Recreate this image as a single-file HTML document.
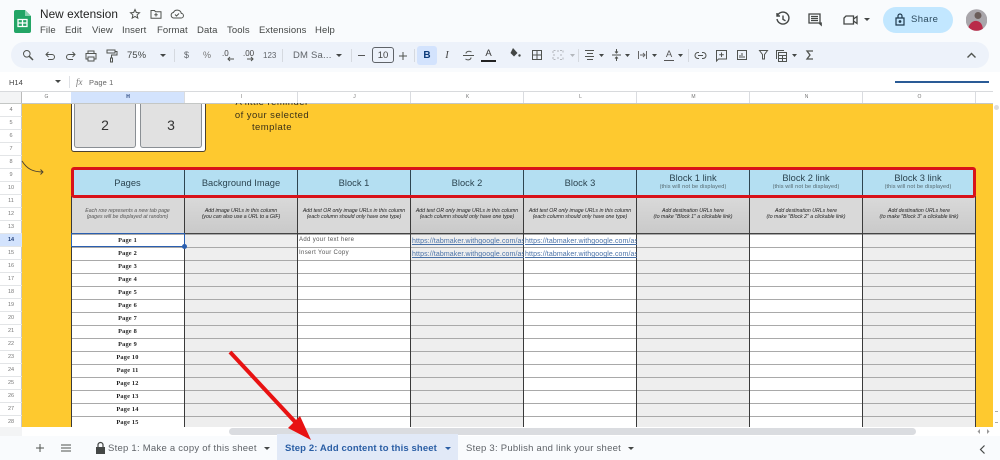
<!DOCTYPE html>
<html><head><meta charset="utf-8"><style>
html,body{margin:0;padding:0;width:1000px;height:460px;overflow:hidden;background:#f9fbfd}
body{position:relative;font-family:"Liberation Sans",sans-serif;color:#444746}
.a,.a *{box-sizing:border-box}
.a{position:absolute;white-space:nowrap}
.c{text-align:center}
.m{font-size:9.5px;top:25px;color:#444746;letter-spacing:.1px}
.ch{top:92px;height:11px;font-size:5px;line-height:11px;color:#777;text-align:center}
.rn{left:0;width:22px;font-size:5.5px;line-height:13px;height:13px;color:#777;text-align:center}
.h{top:170px;height:26px;font-size:9.3px;line-height:26px;text-align:center;color:#2b4450;letter-spacing:.02px}
.hl{top:173px;font-size:9.3px;line-height:11px;text-align:center;color:#2b4450;letter-spacing:.02px}
.hs{top:184px;font-size:5.6px;line-height:6px;text-align:center;color:#55686f;letter-spacing:.1px}
.n{top:208px;font-size:5.2px;line-height:6.3px;text-align:center;font-style:italic;color:#222}
.p{left:71px;width:113px;font-size:6.3px;font-weight:bold;font-family:"Liberation Serif",serif;line-height:13px;text-align:center;color:#222;letter-spacing:.2px}
.t{font-size:6px;line-height:13px;color:#555;left:299px;letter-spacing:.35px}
.u{font-size:7px;line-height:13px;color:#4a72a8;text-decoration:underline;overflow:hidden;width:112px;letter-spacing:.1px}
svg{position:absolute;overflow:visible}
.i{fill:none;stroke:#50534f;stroke-width:1}
.tb{font-size:9px;color:#5f6368}
.tab{font-size:9.5px;top:443px;line-height:11px;letter-spacing:.25px}
</style></head><body>

<!-- top bar -->
<div class="a" style="left:0;top:0;width:1000px;height:72px;background:#f9fbfd"></div>
<svg style="left:14px;top:10px" width="17" height="23" viewBox="0 0 17 23"><path d="M2 0H11L17 6V21a2 2 0 0 1-2 2H2a2 2 0 0 1-2-2V2a2 2 0 0 1 2-2z" fill="#23a566"/><path d="M11 0L17 6H11z" fill="#8ed1b1"/><path d="M4 9.500h9v7H4zM4 13h9M8.500 9.500v7" fill="none" stroke="#fff" stroke-width="1.300"/></svg>
<div class="a" style="left:40px;top:6px;font-size:11.8px;line-height:16px;color:#1f1f1f;letter-spacing:.05px">New extension</div>
<svg class="i" style="left:129px;top:8px" width="12" height="12" viewBox="0 0 12 12"><path d="M6 1.500l1.300 3 3.200.3-2.400 2.100.7 3.200L6 8.400l-2.800 1.700.7-3.200-2.400-2.100 3.200-.3z"/></svg>
<svg class="i" style="left:150px;top:9px" width="12" height="10" viewBox="0 0 12 10"><path d="M1 1.500h3.500l1 1.200H11v6.500H1zM6 4v3.500M4.300 5.700h3.400"/></svg>
<svg class="i" style="left:170px;top:9px" width="14" height="10" viewBox="0 0 14 10"><path d="M3.500 9H11a2.300 2.300 0 0 0 .3-4.600A4.200 4.200 0 0 0 3.400 3.500 2.800 2.800 0 0 0 3.500 9zM5 5.500l1.500 1.500 2.500-2.500"/></svg>
<div class="a m" style="left:40px">File</div>
<div class="a m" style="left:65px">Edit</div>
<div class="a m" style="left:92px">View</div>
<div class="a m" style="left:122px">Insert</div>
<div class="a m" style="left:157px">Format</div>
<div class="a m" style="left:197px">Data</div>
<div class="a m" style="left:227px">Tools</div>
<div class="a m" style="left:259px">Extensions</div>
<div class="a m" style="left:315px">Help</div>

<svg style="left:776px;top:12px;fill:none;stroke:#444746;stroke-width:1.400" width="14" height="14" viewBox="0 0 14 14"><path d="M1.500 3.500A6 6 0 1 1 1 7M1 1v3h3M7 3.500V7.300l2.500 1.500"/></svg>
<svg style="left:808px;top:13px;fill:none;stroke:#444746;stroke-width:1.300" width="14" height="13" viewBox="0 0 14 13"><path d="M1 1h11v9h1.200v2L11 10H1zM3 3.500h7M3 5.500h7M3 7.500h7"/></svg>
<svg style="left:843px;top:14px;fill:none;stroke:#444746;stroke-width:1.300" width="15" height="12" viewBox="0 0 15 12"><path d="M3 2h7.500v8H1V4zM10.500 5L14 2.500v7L10.500 7"/></svg>
<svg style="left:864px;top:18px" width="6" height="3"><path d="M0 0h6L3 3z" fill="#444746"/></svg>
<div class="a" style="left:883px;top:7px;width:70px;height:26px;border-radius:13px;background:#c2e7ff"></div>
<svg style="left:895px;top:13px;fill:none;stroke:#1f3a4d;stroke-width:1.200" width="10" height="13" viewBox="0 0 10 13"><path d="M1 5h8v7H1zM3 5V3a2 2 0 0 1 4 0v2"/><circle cx="5" cy="8.500" r=".8" fill="#1f3a4d"/></svg>
<div class="a" style="left:911px;top:14px;font-size:9.500px;line-height:12px;color:#2b4a5e;letter-spacing:.4px">Share</div>
<svg style="left:966px;top:9px" width="21" height="22" viewBox="0 0 21 22"><defs><clipPath id="av"><circle cx="10.500" cy="11" r="10.800"/></clipPath></defs><g clip-path="url(#av)"><rect width="21" height="22" fill="#a9a6ab"/><circle cx="12" cy="6.500" r="3.500" fill="#6b5d5a"/><path d="M2 22C2 15 7 11 11 12c5 1 6 6 6 10z" fill="#b92b49"/></g></svg>

<!-- toolbar -->
<div class="a" style="left:11px;top:42px;width:978px;height:26px;border-radius:13px;background:#edf2fa"></div>
<div class="a" style="left:417px;top:46px;width:20px;height:19px;border-radius:3px;background:#d3e3fd"></div>
<svg class="i" style="left:22px;top:49px" width="12" height="12" viewBox="0 0 12 12"><circle cx="4.800" cy="4.800" r="3.300"/><path d="M7.300 7.300L11 11" stroke-width="1.500"/></svg>
<svg class="i" style="left:45px;top:51px" width="11" height="10" viewBox="0 0 11 10"><path d="M3.500 1L1 3.500 3.500 6M1 3.500h6a2.500 2.500 0 0 1 0 5H3"/></svg>
<svg class="i" style="left:65px;top:51px" width="11" height="10" viewBox="0 0 11 10"><path d="M7.500 1L10 3.500 7.500 6M10 3.500H4a2.500 2.500 0 0 0 0 5h4"/></svg>
<svg class="i" style="left:85px;top:50px" width="12" height="12" viewBox="0 0 12 12"><path d="M3 3.500V1h6v2.500M3 9H1V3.500h10V9H9M3 7h6v4H3z"/></svg>
<svg class="i" style="left:106px;top:49px" width="12" height="14" viewBox="0 0 12 14"><path d="M1 1h8v3H1zM9 2.500h2v3.500H5.500v3M4.500 9h2v4h-2z"/></svg>
<div class="a tb" style="left:127px;top:49px;font-size:9.500px;line-height:14px;color:#444746">75%</div>
<svg style="left:160px;top:54px" width="6" height="3"><path d="M0 0h6L3 3z" fill="#444746"/></svg>
<div class="a" style="left:174px;top:49px;width:1px;height:13px;background:#d5d9df"></div>
<div class="a tb" style="left:184px;top:49px;line-height:13px">$</div>
<div class="a tb" style="left:203px;top:49px;line-height:13px;color:#777">%</div>
<div class="a tb" style="left:222px;top:47px;line-height:13px;font-size:8px;color:#444">.0</div>
<svg class="i" style="left:227px;top:57px" width="7" height="4"><path d="M7 2H1M3 0L1 2l2 2"/></svg>
<div class="a tb" style="left:243px;top:47px;line-height:13px;font-size:8px;color:#444">.00</div>
<svg class="i" style="left:247px;top:57px" width="7" height="4"><path d="M0 2h6M4 0l2 2-2 2"/></svg>
<div class="a tb" style="left:263px;top:49px;line-height:13px;font-size:8px">123</div>
<div class="a" style="left:282px;top:49px;width:1px;height:13px;background:#d5d9df"></div>
<div class="a tb" style="left:293px;top:49px;line-height:14px;font-size:9.500px;letter-spacing:.2px">DM Sa...</div>
<svg style="left:336px;top:54px" width="6" height="3"><path d="M0 0h6L3 3z" fill="#444746"/></svg>
<div class="a" style="left:351px;top:49px;width:1px;height:13px;background:#d5d9df"></div>
<div class="a" style="left:358px;top:55px;width:7px;height:1px;background:#555"></div>
<div class="a c" style="left:372px;top:47px;width:22px;height:16px;border:1px solid #5f6368;border-radius:3px;font-size:9.500px;line-height:15px;color:#444">10</div>
<svg class="i" style="left:399px;top:52px" width="8" height="8"><path d="M0 4h8M4 0v8"/></svg>
<div class="a" style="left:414px;top:49px;width:1px;height:13px;background:#d5d9df"></div>
<div class="a c" style="left:417px;top:49px;width:20px;font-size:10px;line-height:14px;font-weight:bold;color:#0b3a7a">B</div>
<div class="a c" style="left:437px;top:49px;width:20px;font-size:10.500px;line-height:14px;font-style:italic;color:#444;font-family:'Liberation Serif',serif">I</div>
<svg class="i" style="left:463px;top:50px" width="11" height="11" viewBox="0 0 11 11"><path d="M8.500 2C6 .5 3 1.500 3 3.500M0 5.500h11M8 7.500c0 2.500-3.500 3-5.500 1.500"/></svg>
<div class="a c" style="left:481px;top:47px;width:15px;font-size:9.500px;line-height:14px;color:#333">A</div>
<div class="a" style="left:481px;top:60px;width:15px;height:2px;background:#222"></div>

<svg style="left:510px;top:48px" width="11" height="12" viewBox="0 0 11 12"><path d="M3 0L7.500 5 4 8.500 .5 5z" fill="#444746"/><circle cx="9.500" cy="7.500" r="1.200" fill="#444746"/></svg>
<svg class="i" style="left:532px;top:50px" width="10" height="10"><path d="M.5.500h9v9h-9zM5 .5v9M.5 5h9"/></svg>
<svg style="left:553px;top:50px;fill:none;stroke:#b3b7bc;stroke-width:1" width="10" height="10"><path d="M0 3V.5h3M7 .5h3V3M0 7v2.500h3M7 9.500h3V7M0 5h3M7 5h3M5 0v3M5 7v3" stroke-dasharray="2 1"/></svg>
<svg style="left:570px;top:54px" width="5" height="3"><path d="M0 0h5L2.500 3z" fill="#b3b7bc"/></svg>
<div class="a" style="left:578px;top:49px;width:1px;height:13px;background:#d5d9df"></div>
<svg class="i" style="left:585px;top:50px" width="10" height="10"><path d="M0 .5h9M2 3.500h6M0 6.500h9M2 9.500h6"/></svg>
<svg style="left:599px;top:54px" width="5" height="3"><path d="M0 0h5L2.500 3z" fill="#444746"/></svg>
<svg class="i" style="left:612px;top:49px" width="9" height="12" viewBox="0 0 9 12"><path d="M0 6h9M4.500 0v4M3 2.500l1.500 1.500L6 2.500M4.500 12V8M3 9.500L4.500 8 6 9.500"/></svg>
<svg style="left:625px;top:54px" width="5" height="3"><path d="M0 0h5L2.500 3z" fill="#444746"/></svg>
<svg class="i" style="left:638px;top:50px;stroke:#666" width="9" height="10"><path d="M.5 1v8M8.500 1v8M2 5h5M5 3l2 2-2 2"/></svg>
<svg style="left:652px;top:54px" width="5" height="3"><path d="M0 0h5L2.500 3z" fill="#444746"/></svg>
<div class="a c" style="left:664px;top:49px;width:10px;font-size:9.500px;line-height:12px;color:#555">A</div>
<div class="a" style="left:664px;top:60px;width:10px;height:1px;background:#555"></div>
<svg style="left:678px;top:54px" width="5" height="3"><path d="M0 0h5L2.500 3z" fill="#444746"/></svg>
<div class="a" style="left:688px;top:49px;width:1px;height:13px;background:#d5d9df"></div>
<svg class="i" style="left:695px;top:52px" width="11" height="7"><path d="M4 .5H3a3 3 0 0 0 0 6h1M7 .5h1a3 3 0 0 1 0 6H7M3 3.500h5"/></svg>
<svg class="i" style="left:716px;top:50px" width="11" height="12" viewBox="0 0 11 12"><path d="M.5.500h10v8.500H2.500L.5 11zM5.500 2.500v4.500M3.200 4.700h4.600"/></svg>
<svg class="i" style="left:737px;top:50px" width="10" height="10"><path d="M.5.500h9v9h-9zM3 8V5M5 8V3M7 8V6"/></svg>
<svg class="i" style="left:759px;top:50px" width="9" height="10"><path d="M.5.500h8L5.500 4.500V9h-2V4.500z"/></svg>
<svg class="i" style="left:776px;top:50px" width="11" height="12"><path d="M.5 9V.5H8M2.500 2.500h8v9h-8zM2.500 5.500h8M6.500 5.500v6M2.500 8.500h8"/></svg>
<svg style="left:792px;top:54px" width="5" height="3"><path d="M0 0h5L2.500 3z" fill="#444746"/></svg>
<svg class="i" style="left:806px;top:50px;stroke-width:1.300" width="8" height="10"><path d="M7 1H1l3 4-3 4h6"/></svg>
<svg class="i" style="left:967px;top:53px;stroke-width:1.400" width="9" height="5"><path d="M.5 4.500L4.500.5l4 4"/></svg>

<!-- formula bar -->
<div class="a" style="left:0;top:72px;width:1000px;height:19px;background:#fff"></div>
<div class="a" style="left:9px;top:76px;font-size:7.500px;line-height:13px;color:#444">H14</div>
<svg style="left:55px;top:80px" width="6" height="3"><path d="M0 0h6L3 3z" fill="#444746"/></svg>
<div class="a" style="left:69px;top:76px;width:1px;height:12px;background:#dfe1e5"></div>
<div class="a" style="left:76px;top:76px;font-size:9px;line-height:13px;font-style:italic;font-family:'Liberation Serif',serif;color:#777">fx</div>
<div class="a" style="left:89px;top:76px;font-size:7.500px;line-height:13px;color:#666;letter-spacing:.1px">Page 1</div>
<div class="a" style="left:895px;top:81px;width:94px;height:2px;background:#2a5b96"></div>

<!-- sheet base -->
<div class="a" style="left:0;top:91px;width:1000px;height:345px;background:#fff"></div>
<div class="a" style="left:22px;top:103px;width:971px;height:324px;background:#fec92f"></div>

<!-- col headers -->
<div class="a" style="left:0;top:91px;width:993px;height:1px;background:#d8dadd"></div>
<div class="a" style="left:0;top:92px;width:22px;height:11px;background:#f3f4f5;border-right:1px solid #bbb"></div>
<div class="a" style="left:71px;top:92px;width:114px;height:11px;background:#d3e3fd"></div>
<div class="a ch" style="left:22px;width:49px">G</div>
<div class="a ch" style="left:71px;width:114px;font-weight:bold;color:#25427a">H</div>
<div class="a ch" style="left:185px;width:113px">I</div>
<div class="a ch" style="left:298px;width:113px">J</div>
<div class="a ch" style="left:411px;width:113px">K</div>
<div class="a ch" style="left:524px;width:113px">L</div>
<div class="a ch" style="left:637px;width:113px">M</div>
<div class="a ch" style="left:750px;width:113px">N</div>
<div class="a ch" style="left:863px;width:113px">O</div>
<div class="a" style="left:184px;top:92px;width:1px;height:11px;background:#dadce0"></div>
<div class="a" style="left:297px;top:92px;width:1px;height:11px;background:#dadce0"></div>
<div class="a" style="left:410px;top:92px;width:1px;height:11px;background:#dadce0"></div>
<div class="a" style="left:523px;top:92px;width:1px;height:11px;background:#dadce0"></div>
<div class="a" style="left:636px;top:92px;width:1px;height:11px;background:#dadce0"></div>
<div class="a" style="left:749px;top:92px;width:1px;height:11px;background:#dadce0"></div>
<div class="a" style="left:862px;top:92px;width:1px;height:11px;background:#dadce0"></div>
<div class="a" style="left:975px;top:92px;width:1px;height:11px;background:#dadce0"></div>
<div class="a" style="left:0;top:103px;width:993px;height:1px;background:#c4c7c5"></div>

<!-- row numbers -->
<div class="a" style="left:0;top:104px;width:22px;height:323px;background:#fff;border-right:1px solid #c8c8c8"></div>
<div class="a" style="left:0;top:234px;width:22px;height:13px;background:#d3e3fd"></div>
<div class="a" style="left:0;top:104px;width:22px;height:323px;background:repeating-linear-gradient(to bottom,transparent 0,transparent 12px,#e3e5e7 12px,#e3e5e7 13px)"></div>
<div class="a rn" style="top:104px">4</div><div class="a rn" style="top:117px">5</div><div class="a rn" style="top:130px">6</div><div class="a rn" style="top:143px">7</div><div class="a rn" style="top:156px">8</div><div class="a rn" style="top:169px">9</div><div class="a rn" style="top:182px">10</div><div class="a rn" style="top:195px">11</div><div class="a rn" style="top:208px">12</div><div class="a rn" style="top:221px">13</div><div class="a rn" style="top:234px;font-weight:bold;color:#25427a">14</div><div class="a rn" style="top:247px">15</div><div class="a rn" style="top:260px">16</div><div class="a rn" style="top:273px">17</div><div class="a rn" style="top:286px">18</div><div class="a rn" style="top:299px">19</div><div class="a rn" style="top:312px">20</div><div class="a rn" style="top:325px">21</div><div class="a rn" style="top:338px">22</div><div class="a rn" style="top:351px">23</div><div class="a rn" style="top:364px">24</div><div class="a rn" style="top:377px">25</div><div class="a rn" style="top:390px">26</div><div class="a rn" style="top:403px">27</div><div class="a rn" style="top:416px">28</div>

<!-- reminder card -->
<div class="a" style="left:71px;top:104px;width:135px;height:48px;background:#fff;border:1px solid #4a4030;border-top:0;border-radius:0 0 3px 3px"></div>
<div class="a" style="left:74px;top:104px;width:62px;height:44px;background:#e1e1e1;border:1px solid #8a8f94;border-top:0;border-radius:0 0 3px 3px;text-align:center;font-size:14px;line-height:42px;color:#333">2</div>
<div class="a" style="left:140px;top:104px;width:62px;height:44px;background:#e1e1e1;border:1px solid #8a8f94;border-top:0;border-radius:0 0 3px 3px;text-align:center;font-size:14px;line-height:42px;color:#333">3</div>
<div class="a c" style="left:192px;top:97px;width:160px;font-size:9.500px;line-height:12.700px;color:#3a3118;letter-spacing:.45px;clip-path:inset(6px 0 0 0)">A little reminder<br>of your selected<br>template</div>
<svg style="left:22px;top:160px;fill:none;stroke:#4a4030;stroke-width:.9" width="22" height="16" viewBox="0 0 22 16"><path d="M0 1C5 9 11 12 21 12M18.500 9.500L21 12 18.500 14.500"/></svg>

<!-- table bodies -->
<div class="a" style="left:71px;top:196px;width:905px;height:38px;background:#d9d9d9"></div>
<div class="a" style="left:185px;top:196px;width:113px;height:38px;background:linear-gradient(#dadada,#c9c9c9)"></div>
<div class="a" style="left:411px;top:196px;width:113px;height:38px;background:linear-gradient(#dadada,#c9c9c9)"></div>
<div class="a" style="left:637px;top:196px;width:113px;height:38px;background:linear-gradient(#dadada,#c9c9c9)"></div>
<div class="a" style="left:863px;top:196px;width:113px;height:38px;background:linear-gradient(#dadada,#c9c9c9)"></div>

<div class="a" style="left:71px;top:234px;width:905px;height:193px;background:#fff"></div>
<div class="a" style="left:185px;top:234px;width:113px;height:193px;background:#eee"></div>
<div class="a" style="left:411px;top:234px;width:113px;height:193px;background:#eee"></div>
<div class="a" style="left:637px;top:234px;width:113px;height:193px;background:#eee"></div>
<div class="a" style="left:863px;top:234px;width:113px;height:193px;background:#eee"></div>
<div class="a" style="left:71px;top:234px;width:905px;height:193px;background:repeating-linear-gradient(to bottom,#a9a9a9 0,#a9a9a9 1px,transparent 1px,transparent 13px)"></div>
<div class="a" style="left:71px;top:233px;width:905px;height:1px;background:#444"></div>

<!-- column rules -->
<div class="a" style="left:71px;top:196px;width:1px;height:231px;background:#3a3a3a"></div>
<div class="a" style="left:184px;top:170px;width:1px;height:257px;background:#3a3a3a"></div>
<div class="a" style="left:297px;top:170px;width:1px;height:257px;background:#3a3a3a"></div>
<div class="a" style="left:410px;top:170px;width:1px;height:257px;background:#3a3a3a"></div>
<div class="a" style="left:523px;top:170px;width:1px;height:257px;background:#3a3a3a"></div>
<div class="a" style="left:636px;top:170px;width:1px;height:257px;background:#3a3a3a"></div>
<div class="a" style="left:749px;top:170px;width:1px;height:257px;background:#3a3a3a"></div>
<div class="a" style="left:862px;top:170px;width:1px;height:257px;background:#3a3a3a"></div>
<div class="a" style="left:975px;top:196px;width:1px;height:231px;background:#3a3a3a"></div>

<!-- header band -->
<div class="a" style="left:71px;top:167px;width:905px;height:31px;border:3px solid #d8121a;border-radius:3px;background:#b4dff2"></div>
<div class="a" style="left:184px;top:170px;width:1px;height:25px;background:#2e4450"></div>
<div class="a" style="left:297px;top:170px;width:1px;height:25px;background:#2e4450"></div>
<div class="a" style="left:410px;top:170px;width:1px;height:25px;background:#2e4450"></div>
<div class="a" style="left:523px;top:170px;width:1px;height:25px;background:#2e4450"></div>
<div class="a" style="left:636px;top:170px;width:1px;height:25px;background:#2e4450"></div>
<div class="a" style="left:749px;top:170px;width:1px;height:25px;background:#2e4450"></div>
<div class="a" style="left:862px;top:170px;width:1px;height:25px;background:#2e4450"></div>
<div class="a h" style="left:71px;width:113px">Pages</div>
<div class="a h" style="left:185px;width:112px">Background Image</div>
<div class="a h" style="left:298px;width:112px">Block 1</div>
<div class="a h" style="left:411px;width:112px">Block 2</div>
<div class="a h" style="left:524px;width:112px">Block 3</div>
<div class="a hl" style="left:637px;width:112px">Block 1 link</div><div class="a hs" style="left:637px;width:112px">(this will not be displayed)</div>
<div class="a hl" style="left:750px;width:112px">Block 2 link</div><div class="a hs" style="left:750px;width:112px">(this will not be displayed)</div>
<div class="a hl" style="left:863px;width:110px">Block 3 link</div><div class="a hs" style="left:863px;width:110px">(this will not be displayed)</div>

<!-- notes -->
<div class="a n" style="left:71px;width:113px;color:#555">Each row represents a new tab page<br>(pages will be displayed at random)</div>
<div class="a n" style="left:185px;width:112px">Add image URLs in this column<br>(you can also use a URL to a GIF)</div>
<div class="a n" style="left:298px;width:112px">Add text OR only image URLs in this column<br>(each column should only have one type)</div>
<div class="a n" style="left:411px;width:112px">Add text OR only image URLs in this column<br>(each column should only have one type)</div>
<div class="a n" style="left:524px;width:112px">Add text OR only image URLs in this column<br>(each column should only have one type)</div>
<div class="a n" style="left:637px;width:112px">Add destination URLs here<br>(to make "Block 1" a clickable link)</div>
<div class="a n" style="left:750px;width:112px">Add destination URLs here<br>(to make "Block 2" a clickable link)</div>
<div class="a n" style="left:863px;width:112px">Add destination URLs here<br>(to make "Block 3" a clickable link)</div>

<!-- pages -->
<div class="a p" style="top:234px">Page 1</div><div class="a p" style="top:247px">Page 2</div><div class="a p" style="top:260px">Page 3</div><div class="a p" style="top:273px">Page 4</div><div class="a p" style="top:286px">Page 5</div><div class="a p" style="top:299px">Page 6</div><div class="a p" style="top:312px">Page 7</div><div class="a p" style="top:325px">Page 8</div><div class="a p" style="top:338px">Page 9</div><div class="a p" style="top:351px">Page 10</div><div class="a p" style="top:364px">Page 11</div><div class="a p" style="top:377px">Page 12</div><div class="a p" style="top:390px">Page 13</div><div class="a p" style="top:403px">Page 14</div><div class="a p" style="top:416px;height:11px;overflow:hidden">Page 15</div>

<div class="a t" style="top:234px">Add your text here</div>
<div class="a t" style="top:247px">Insert Your Copy</div>
<div class="a u" style="left:412px;top:235px">https://tabmaker.withgoogle.com/assets/image1</div>
<div class="a u" style="left:412px;top:248px">https://tabmaker.withgoogle.com/assets/image2</div>
<div class="a u" style="left:525px;top:235px">https://tabmaker.withgoogle.com/assets/image3</div>
<div class="a u" style="left:525px;top:248px">https://tabmaker.withgoogle.com/assets/image4</div>

<!-- selection -->
<div class="a" style="left:71px;top:233px;width:114px;height:14px;border:1px solid #2a5fb0"></div>
<div class="a" style="left:182px;top:244px;width:5px;height:5px;border-radius:50%;background:#2a5fb0"></div>

<!-- vertical scrollbar -->
<div class="a" style="left:993px;top:91px;width:7px;height:345px;background:#fff"></div>
<div class="a" style="left:994px;top:105px;width:5px;height:5px;border-radius:50%;background:#dcdcdc"></div>
<div class="a" style="left:995px;top:411px;width:3px;height:1px;background:#aaa"></div>
<div class="a" style="left:995px;top:422px;width:3px;height:1px;background:#aaa"></div>

<!-- horizontal scrollbar -->
<div class="a" style="left:0;top:427px;width:1000px;height:9px;background:#fff"></div>
<div class="a" style="left:0;top:427px;width:22px;height:9px;background:#f3f4f5"></div>
<div class="a" style="left:229px;top:428px;width:687px;height:7px;border-radius:3.500px;background:#dadce0"></div>
<svg style="left:976px;top:429px" width="22" height="5"><path d="M4 0L1.500 2.500 4 5z" fill="#999"/><path d="M11 0l2.500 2.500L11 5z" fill="#999"/></svg>

<!-- bottom bar -->
<div class="a" style="left:0;top:436px;width:1000px;height:24px;background:#f9fbfd"></div>
<svg class="i" style="left:36px;top:444px" width="8" height="8"><path d="M0 4h8M4 0v8"/></svg>
<svg class="i" style="left:61px;top:444px" width="10" height="8"><path d="M0 1h10M0 4h10M0 7h10"/></svg>
<svg style="left:96px;top:442px" width="9" height="12" viewBox="0 0 9 12"><path d="M0 5h9v7H0z" fill="#444746"/><path d="M2 5V3a2.500 2.500 0 0 1 5 0v2" fill="none" stroke="#444746" stroke-width="1.200"/></svg>
<div class="a tab" style="left:108px;color:#5f6368">Step 1: Make a copy of this sheet</div>
<svg style="left:264px;top:447px" width="6" height="3"><path d="M0 0h6L3 3z" fill="#444746"/></svg>
<div class="a" style="left:277px;top:434px;width:181px;height:26px;background:#e1e9f7"></div>
<div class="a tab" style="left:285px;color:#2a5ea5;font-weight:bold;letter-spacing:.12px">Step 2: Add content to this sheet</div>
<svg style="left:445px;top:447px" width="6" height="3"><path d="M0 0h6L3 3z" fill="#2a5ea5"/></svg>
<div class="a tab" style="left:466px;color:#5f6368">Step 3: Publish and link your sheet</div>
<svg style="left:628px;top:447px" width="6" height="3"><path d="M0 0h6L3 3z" fill="#444746"/></svg>
<svg style="left:980px;top:445px;fill:none;stroke:#444746;stroke-width:1.200" width="5" height="9"><path d="M4.500.5L.5 4.500l4 4"/></svg>

<!-- red arrow -->
<svg style="left:0;top:0" width="1000" height="460"><path d="M230 352L298 425" stroke="#e81212" stroke-width="4" fill="none"/><path d="M311 440L288 428 300 416z" fill="#e81212"/></svg>

</body></html>
